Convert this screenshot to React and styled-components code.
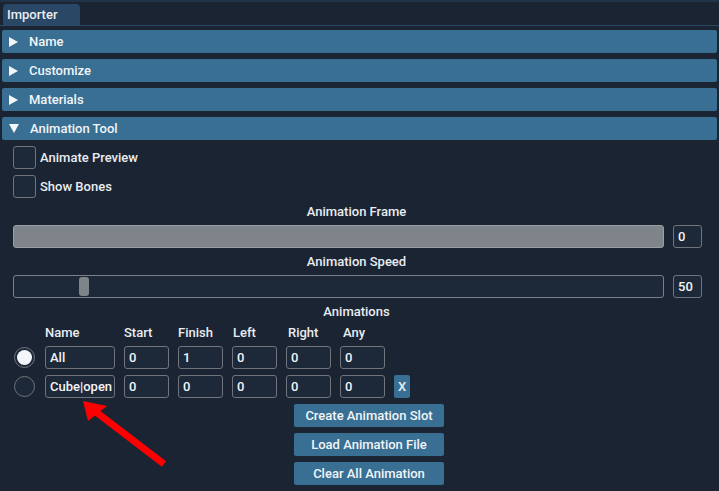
import React from 'react';
import styled, { createGlobalStyle } from 'styled-components';

const GlobalStyle = createGlobalStyle`
  html, body { margin: 0; padding: 0; background: #1b2433; }
  body {
    font-family: Roboto, "Liberation Sans", sans-serif;
    font-size: 13px;
    color: #e9edf2;
  }
`;

const Window = styled.div`
  position: relative;
  width: 719px;
  height: 491px;
  overflow: hidden;
  background: #1b2433;
  border-top: 2px solid #213348;
  box-sizing: border-box;
`;

const TabBar = styled.div`
  display: flex;
  align-items: flex-end;
  height: 23px;
  padding-left: 3px;
  border-bottom: 1px solid #2c4866;
`;

const Tab = styled.div`
  width: 77px;
  height: 21px;
  box-sizing: border-box;
  padding: 3px 0 0 4px;
  background: #2a4765;
  border-radius: 4px 4px 0 0;
  font-weight: 500;
`;

const Content = styled.div`
  display: flex;
  flex-direction: column;
  gap: 6px;
  padding: 4px 2px 0 2px;
`;

const Header = styled.div`
  display: flex;
  align-items: center;
  gap: 11px;
  height: 23px;
  padding-left: 7px;
  background: #386f93;
  border-radius: 2px;
  font-weight: 500;
  color: #f2f5f8;
`;

const Arrow = styled.svg`
  width: 9px;
  height: 10px;
  fill: #f4f6f8;
`;

const CheckRow = styled.label`
  display: flex;
  align-items: center;
  gap: 4px;
  height: 23px;
  padding-left: 11px;
  font-weight: 500;
`;

const Box = styled.span`
  width: 23px;
  height: 23px;
  box-sizing: border-box;
  border: 1px solid #70757d;
  border-radius: 3px;
  background: #1d2839;
`;

const Caption = styled.div`
  height: 15px;
  line-height: 15px;
  text-align: center;
  padding-right: 6px;
  font-weight: 500;
`;

const SliderRow = styled.div`
  display: flex;
  align-items: center;
  gap: 9px;
  padding-left: 11px;
`;

const Track = styled.div`
  position: relative;
  width: 651px;
  height: 23px;
  box-sizing: border-box;
  border: 1px solid ${p => (p.$full ? '#9a9ea5' : '#7b8088')};
  border-radius: 3px;
  background: ${p => (p.$full ? '#7f838a' : '#1d2839')};
`;

const Grab = styled.div`
  position: absolute;
  top: 1px;
  width: 10px;
  height: 19px;
  border-radius: 3px;
  background: #7f838a;
`;

const Field = styled.div`
  width: ${p => p.$w || 45}px;
  height: 23px;
  box-sizing: border-box;
  padding-left: 4px;
  line-height: 21px;
  border: 1px solid #70757d;
  border-radius: 3px;
  background: #1d2839;
  color: #f2f5f8;
  font-weight: 500;
  white-space: nowrap;
  overflow: hidden;
`;

const Grid = styled.div`
  display: grid;
  grid-template-columns: 22px 70px repeat(5, 45px) 16px;
  column-gap: 9px;
  row-gap: 6px;
  align-items: center;
  padding-left: 12px;
`;

const ColHead = styled.div`
  height: 15px;
  line-height: 15px;
  font-weight: 500;
  padding-left: ${p => p.$pad || 0}px;
`;

const Radio = styled.span`
  width: 21px;
  height: 21px;
  box-sizing: border-box;
  border-radius: 50%;
  border: 1px solid #70757d;
  background: #1d2839;
  display: flex;
  align-items: center;
  justify-content: center;
  &::after {
    content: '';
    display: ${p => (p.$on ? 'block' : 'none')};
    width: 15px;
    height: 15px;
    border-radius: 50%;
    background: #f3f7fc;
  }
`;

const SmallButton = styled.div`
  height: 23px;
  line-height: 23px;
  text-align: center;
  background: #386f93;
  border-radius: 2px;
  font-weight: 500;
`;

const Actions = styled.div`
  display: flex;
  flex-direction: column;
  gap: 6px;
  padding-left: 292px;
`;

const Button = styled.div`
  width: 150px;
  height: 23px;
  line-height: 23px;
  text-align: center;
  background: #386f93;
  border-radius: 2px;
  font-weight: 500;
  color: #f2f5f8;
`;

const Annotation = styled.svg`
  position: absolute;
  left: 0;
  top: 0;
  width: 719px;
  height: 491px;
  pointer-events: none;
`;

const Right = () => (
  <Arrow viewBox="0 0 9 10"><path d="M0 0 L9 5 L0 10 Z" /></Arrow>
);
const Down = () => (
  <Arrow viewBox="0 0 10 9" style={{ width: 10, height: 9 }}><path d="M0 0 L10 0 L5 9 Z" /></Arrow>
);

const speed = 50;
const speedMax = 500;

const rows = [
  { on: true, name: 'All', vals: ['0', '1', '0', '0', '0'] },
  { on: false, name: 'Cube|open', vals: ['0', '0', '0', '0', '0'], remove: true },
];

export default function App() {
  return (
    <>
      <GlobalStyle />
      <Window>
        <TabBar><Tab>Importer</Tab></TabBar>
        <Content>
          <Header><Right />Name</Header>
          <Header><Right />Customize</Header>
          <Header><Right />Materials</Header>
          <Header><Down />Animation Tool</Header>
          <CheckRow><Box />Animate Preview</CheckRow>
          <CheckRow><Box />Show Bones</CheckRow>
          <Caption>Animation Frame</Caption>
          <SliderRow>
            <Track $full />
            <Field $w={29}>0</Field>
          </SliderRow>
          <Caption>Animation Speed</Caption>
          <SliderRow>
            <Track>
              <Grab style={{ left: 1 + (speed / speedMax) * 637 }} />
            </Track>
            <Field $w={29}>50</Field>
          </SliderRow>
          <Caption>Animations</Caption>
          <Grid>
            <span />
            <ColHead>Name</ColHead>
            <ColHead>Start</ColHead>
            <ColHead>Finish</ColHead>
            <ColHead $pad={1}>Left</ColHead>
            <ColHead $pad={2}>Right</ColHead>
            <ColHead $pad={3}>Any</ColHead>
            <span />
            {rows.map((r, i) => (
              <React.Fragment key={i}>
                <Radio $on={r.on} />
                <Field $w={70}>{r.name}</Field>
                {r.vals.map((v, j) => <Field key={j}>{v}</Field>)}
                {r.remove ? <SmallButton>X</SmallButton> : <span />}
              </React.Fragment>
            ))}
          </Grid>
          <Actions>
            <Button>Create Animation Slot</Button>
            <Button>Load Animation File</Button>
            <Button>Clear All Animation</Button>
          </Actions>
        </Content>
        <Annotation viewBox="0 0 719 491">
          <line x1="164" y1="462" x2="96" y2="410" stroke="#ff0000" strokeWidth="7" />
          <polygon points="83,399 88,419 107,404" fill="#ff0000" />
        </Annotation>
      </Window>
    </>
  );
}
